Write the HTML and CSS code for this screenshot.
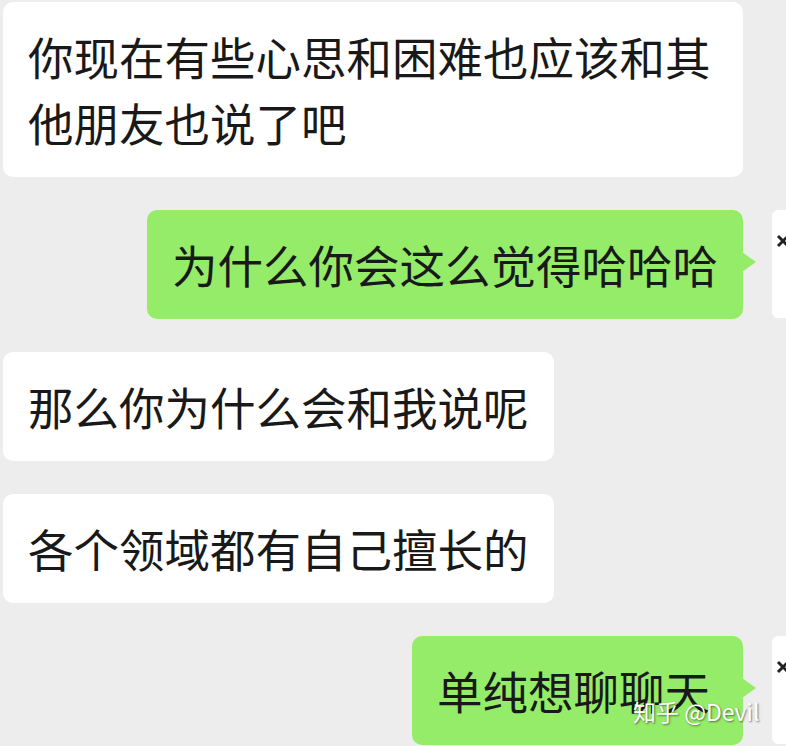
FILE: index.html
```html
<!DOCTYPE html>
<html lang="zh">

<head>
    <meta charset="utf-8">
    <meta name="viewport" content="width=device-width, initial-scale=1.0">
    <title>聊天</title>
    <link rel="stylesheet" href="styles.css">
</head>

<body>
    <main class="chat">
        <div class="rad venstre">
            <p class="boble hvid">你现在有些心思和困难也应该和其他朋友也说了吧</p>
        </div>

        <div class="rad hoejre">
            <p class="boble groen">为什么你会这么觉得哈哈哈</p>
            <div class="avatar">
                <svg width="12" height="28" viewBox="0 0 12 28">
                    <path d="M2 4 L12 14 M12 4 L2 14" stroke="#222" stroke-width="3" fill="none"/>
                </svg>
            </div>
        </div>

        <div class="rad venstre">
            <p class="boble hvid">那么你为什么会和我说呢</p>
        </div>

        <div class="rad venstre">
            <p class="boble hvid">各个领域都有自己擅长的</p>
        </div>

        <div class="rad hoejre">
            <p class="boble groen kort">单纯想聊聊天</p>
            <div class="avatar">
                <svg width="12" height="28" viewBox="0 0 12 28">
                    <path d="M2 4 L12 14 M12 4 L2 14" stroke="#222" stroke-width="3" fill="none"/>
                </svg>
            </div>
        </div>
    </main>

    <div class="vandmaerke">知乎 @Devil</div>
</body></html>
```

FILE: styles.css
```css
html,
body {
    margin: 0;
    height: 746px;
    overflow: hidden;
}

body {
    background-color: #ededed;
    font-family: "Noto Sans CJK SC", "Noto Sans", sans-serif;
    color: #191919;
    position: relative;
}

.chat {
    display: flex;
    flex-direction: column;
    gap: 33px;
    padding-top: 2px;
    width: 786px;
}

.rad {
    display: flex;
    align-items: flex-start;
}

.venstre {
    padding-left: 3px;
}

.hoejre {
    justify-content: flex-end;
    gap: 29px;
}

.boble {
    margin: 0;
    position: relative;
    box-sizing: border-box;
    max-width: 740px;
    padding: 21px 25px 22px;
    font-size: 45.5px;
    line-height: 66px;
    border-radius: 10px;
}

.kort {
    padding-right: 33px;
}

.hvid {
    background-color: #ffffff;
}

.groen {
    background-color: #95ec69;
}

.groen::after {
    content: "";
    position: absolute;
    right: -13px;
    top: 42px;
    border-left: 14px solid #95ec69;
    border-top: 10px solid transparent;
    border-bottom: 10px solid transparent;
}

.avatar {
    flex: none;
    width: 14px;
    height: 108px;
    background-color: #ffffff;
    border-radius: 6px 0 0 6px;
    box-sizing: border-box;
    padding: 22px 0 0 4px;
    overflow: hidden;
}

.vandmaerke {
    position: absolute;
    left: 633px;
    top: 694px;
    font-size: 23px;
    color: #ffffff;
    text-shadow: 1px 1px 2px rgba(0, 0, 0, 0.5);
}
```
